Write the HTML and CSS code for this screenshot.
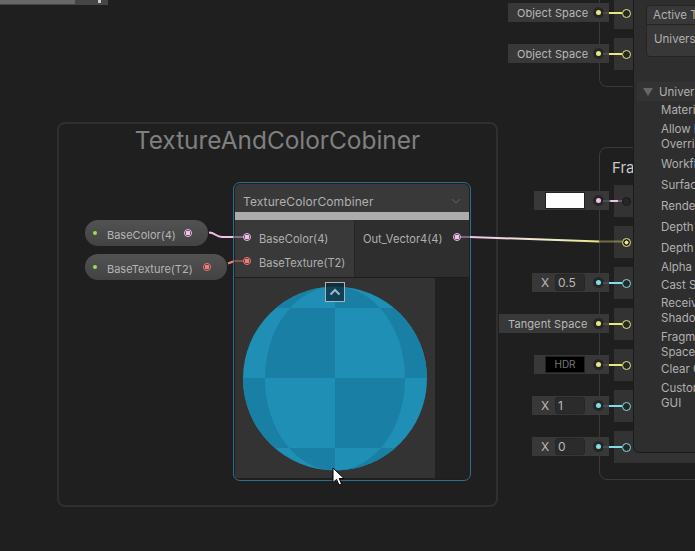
FILE: index.html
```html
<!DOCTYPE html>
<html lang="en">
<head>
    <meta charset="UTF-8">
    <title>Shader Graph</title>
    <link rel="stylesheet" href="styles.css">
</head>
<body>
    <div class="canvas">
        <div class="top-bar"><div class="top-bar-fill"></div><div class="top-bar-mark"></div></div>

        <div class="group">
            <div class="group-title">TextureAndColorCobiner</div>
        </div>

        <div class="context context-vertex"></div>
        <div class="context context-fragment"></div>

        <!-- wires between nodes -->
        <svg class="wires" width="695" height="551" viewBox="0 0 695 551">
            <defs>
                <linearGradient id="outWire" gradientUnits="userSpaceOnUse" x1="470" y1="237" x2="600" y2="241">
                    <stop offset="0" stop-color="#f2c0ea"/>
                    <stop offset="0.55" stop-color="#f0ecd0"/>
                    <stop offset="1" stop-color="#e6e67c"/>
                </linearGradient>
            </defs>
            <path class="wire" d="M209 232.5C215 232.5 216 237 222 237H233" stroke="#f2c0ea"/>
            <path class="wire-fade" d="M233 237H244" stroke="#f2c0ea"/>
            <path class="wire" d="M228 263.5L233 261.5" stroke="#f08080"/>
            <path class="wire-fade" d="M233 261H244" stroke="#f08080"/>
            <path class="wire-fade" d="M461 237H470" stroke="#f2c0ea"/>
            <path class="wire" d="M470 237L599 241.5" stroke="url(#outWire)"/>
            <path class="wire-fade" d="M599 241.5H622" stroke="#e6e67c"/>
        </svg>

        <div class="pill pill-color">
            <span class="pill-dot"></span>
            <span class="pill-label">BaseColor(4)</span>
            <span class="port port-pink"></span>
        </div>
        <div class="pill pill-texture">
            <span class="pill-dot"></span>
            <span class="pill-label">BaseTexture(T2)</span>
            <span class="port port-red"></span>
        </div>

        <div class="node">
            <div class="node-header">
                <span>TextureColorCombiner</span>
                <svg class="node-chevron" width="10" height="6" viewBox="0 0 10 6"><path d="M1 1l4 4 4-4" fill="none" stroke="#555" stroke-width="1.2"/></svg>
            </div>
            <div class="node-bar"></div>
            <div class="node-ports">
                <div class="node-inputs">
                    <div class="node-port"><span class="port port-pink"></span>BaseColor(4)</div>
                    <div class="node-port"><span class="port port-red"></span>BaseTexture(T2)</div>
                </div>
                <div class="node-outputs">
                    <div class="node-port">Out_Vector4(4)<span class="port port-pink"></span></div>
                </div>
            </div>
            <div class="node-preview">
                <div class="preview-area">
                    <svg class="sphere" width="200" height="200" viewBox="235 278 200 200">
                        <defs>
                            <clipPath id="sphereClip"><circle cx="335" cy="378.5" r="92"/></clipPath>
                        </defs>
                        <circle cx="335" cy="378.5" r="92" fill="#1f8fb6"/>
                        <path clip-path="url(#sphereClip)" fill="#1a7fa4" fill-rule="evenodd" d="M243 286H335V471H243Z M265 378.5a70 92 0 1 0 140 0a70 92 0 1 0 -140 0Z M243 308H427V378H243Z M243 448H427V471H243Z"/>
                    </svg>
                    <div class="collapse-btn">
                        <svg width="12" height="8" viewBox="0 0 12 8"><path d="M1.5 6.5L6 2l4.5 4.5" fill="none" stroke="#a4b4bc" stroke-width="2"/></svg>
                    </div>
                </div>
            </div>
        </div>

        <div class="stack stack-vertex">
            <div class="row port-yellow"><div class="field"><span class="field-text">Object Space</span><span class="field-dot"></span></div><div class="block"><span class="stub"></span><span class="slot"></span></div></div>
            <div class="row port-yellow"><div class="field"><span class="field-text">Object Space</span><span class="field-dot"></span></div><div class="block"><span class="stub"></span><span class="slot"></span></div></div>
        </div>

        <div class="stack stack-fragment">
            <div class="row port-rose">
                <div class="field field-swatch"><span class="swatch"></span><span class="field-dot"></span></div>
                <div class="block"><span class="stub stub-short"></span><span class="slot slot-dim"></span></div>
            </div>
            <div class="row port-yellow">
                <div class="block"><span class="slot slot-linked"></span></div>
            </div>
            <div class="row port-cyan">
                <div class="field field-number"><span class="axis">X</span><span class="num">0.5</span><span class="field-dot"></span></div>
                <div class="block"><span class="stub"></span><span class="slot"></span></div>
            </div>
            <div class="row port-yellow">
                <div class="field field-wide"><span class="field-text">Tangent Space</span><span class="field-dot"></span></div>
                <div class="block"><span class="stub"></span><span class="slot"></span></div>
            </div>
            <div class="row port-yellow">
                <div class="field field-swatch"><span class="swatch swatch-hdr">HDR</span><span class="field-dot"></span></div>
                <div class="block"><span class="stub"></span><span class="slot"></span></div>
            </div>
            <div class="row port-cyan">
                <div class="field field-number"><span class="axis">X</span><span class="num">1</span><span class="field-dot"></span></div>
                <div class="block"><span class="stub"></span><span class="slot"></span></div>
            </div>
            <div class="row port-cyan">
                <div class="field field-number"><span class="axis">X</span><span class="num">0</span><span class="field-dot"></span></div>
                <div class="block"><span class="stub"></span><span class="slot"></span></div>
            </div>
        </div>

        <div class="context-title">Fragment</div>

        <div class="inspector">
            <div class="card">
                <div class="card-head">Active Targets</div>
                <div class="card-body">Universal</div>
            </div>
            <div class="section-head"><span class="triangle"></span>Universal</div>
            <ul class="props">
                <li>Material</li>
                <li class="two">Allow Material<br>Override</li>
                <li class="wide">Workflow</li>
                <li class="wide">Surface</li>
                <li class="wide">Render Face</li>
                <li class="wide">Depth Write</li>
                <li>Depth Test</li>
                <li class="tight">Alpha Clip</li>
                <li class="tight">Cast Shadows</li>
                <li>Receive<br>Shadows</li>
                <li class="snug">Fragment<br>Space</li>
                <li>Clear Coat</li>
                <li>Custom<br>GUI</li>
            </ul>
        </div>

        <svg class="cursor" width="14" height="20" viewBox="0 0 14 20">
            <path d="M1 1V15.5L4.6 12.4 7 18l2.6-1.1-2.4-5.4H12Z" fill="#fff" stroke="#000" stroke-width="1"/>
        </svg>
    </div>
</body>
</html>
```

FILE: styles.css
```css
body {
    margin: 0;
    background-color: #1f1f1f;
    font-family: Inter, "Liberation Sans", sans-serif;
    color: #b0b0b0;
    font-size: 11px;
}
.canvas {
    position: relative;
    width: 695px;
    height: 551px;
    overflow: hidden;
}
.top-bar {
    position: absolute;
    left: 0;
    top: 0;
    width: 108px;
    height: 5px;
    background-color: #454545;
}
.top-bar-fill {
    width: 75px;
    height: 4px;
    background-color: #686868;
}
.top-bar-mark {
    position: absolute;
    left: 98px;
    top: 0;
    width: 3px;
    height: 3px;
    background-color: #ccc;
}
.group {
    position: absolute;
    left: 57px;
    top: 122px;
    width: 437px;
    height: 381px;
    border: 2px solid #2f2f2f;
    border-radius: 8px;
}
.group-title {
    margin-top: 1px;
    text-align: center;
    font-size: 24.4px;
    line-height: 30px;
    color: #808080;
}
.context {
    position: absolute;
    left: 599px;
    width: 140px;
    border: 1px solid #3a3a3a;
    border-radius: 8px;
}
.context-vertex {
    top: -60px;
    height: 145px;
}
.context-fragment {
    top: 147px;
    height: 331px;
}
.context-title {
    position: absolute;
    left: 612px;
    top: 158px;
    width: 21px;
    overflow: hidden;
    font-size: 15px;
    line-height: 20px;
    color: #c8c8c8;
}
.wires {
    position: absolute;
    left: 0;
    top: 0;
    z-index: 3;
    pointer-events: none;
}
.wire {
    fill: none;
    stroke-width: 2;
}
.wire-fade {
    fill: none;
    stroke-width: 2;
    opacity: 0.4;
}
.pill {
    position: absolute;
    left: 85px;
    height: 26px;
    display: flex;
    align-items: center;
    box-sizing: border-box;
    padding-left: 8px;
    border-radius: 13px;
    background: linear-gradient(#525252, #434343);
    color: #b4b4b4;
}
.pill-color {
    top: 220px;
    width: 123px;
}
.pill-texture {
    top: 254px;
    width: 142px;
}
.pill-dot {
    width: 4px;
    height: 4px;
    border-radius: 50%;
    background-color: #8fe356;
}
.pill-label {
    margin-left: 10px;
    padding-top: 4px;
    flex: 1;
}
.pill .port {
    margin-right: 16px;
}
.port {
    display: inline-block;
    box-sizing: border-box;
    width: 8px;
    height: 8px;
    border-radius: 50%;
    border: 1px solid currentColor;
    background: radial-gradient(circle, currentColor 0, currentColor 2.2px, #2c2c2c 2.6px);
}
.port-pink {
    color: #f2c0ea;
}
.port-red {
    color: #f07c7c;
}
.node {
    position: absolute;
    left: 233px;
    top: 182px;
    z-index: 2;
    box-sizing: border-box;
    width: 238px;
    height: 299px;
    border: 1.5px solid #2b6f90;
    border-radius: 7px;
    padding: 1px;
    background-color: #1f1f1f;
}
.node-header {
    box-sizing: border-box;
    height: 28px;
    display: flex;
    align-items: center;
    justify-content: space-between;
    padding: 6px 8px 0 8px;
    border-radius: 5px 5px 0 0;
    background-color: #393939;
    font-size: 12px;
    letter-spacing: 0.1px;
}
.node-bar {
    height: 8px;
    background-color: #acacac;
}
.node-ports {
    display: flex;
    box-sizing: border-box;
    height: 57.5px;
    border-bottom: 1px solid #1c1c1c;
}
.node-inputs {
    flex: 0 0 120px;
    padding: 6.5px 0 0 8px;
    box-sizing: border-box;
    background-color: #393939;
    border-right: 1px solid #262626;
}
.node-outputs {
    flex: 1;
    min-width: 0;
    padding: 6.5px 8px 0 8px;
    background-color: #2e2e2e;
}
.node-port {
    display: flex;
    align-items: center;
    height: 24px;
    gap: 8px;
    font-size: 11.1px;
}
.node-outputs .node-port {
    justify-content: space-between;
}
.node-port .port {
    margin-bottom: 4px;
}
.node-preview {
    height: 200px;
    background-color: #212121;
}
.preview-area {
    position: relative;
    width: 200px;
    height: 200px;
    background-color: #333;
}
.sphere {
    display: block;
}
.collapse-btn {
    position: absolute;
    left: 90px;
    top: 4px;
    box-sizing: border-box;
    width: 20px;
    height: 20px;
    display: flex;
    align-items: center;
    justify-content: center;
    border: 1px solid #a8b4ba;
    background-color: rgba(10, 40, 55, 0.72);
}
.stack {
    position: absolute;
    left: 499px;
    width: 200px;
    display: flex;
    flex-direction: column;
    gap: 9px;
}
.stack-vertex {
    top: -3px;
}
.stack-fragment {
    top: 185px;
}
.row {
    position: relative;
    height: 32px;
    display: flex;
    align-items: center;
    justify-content: flex-end;
}
.port-yellow {
    --port: #e8e87c;
}
.port-cyan {
    --port: #7fdfe6;
}
.port-rose {
    --port: #f2c0ea;
}
.field {
    position: absolute;
    left: 9px;
    right: 90px;
    top: 6px;
    height: 19px;
    display: flex;
    align-items: center;
    justify-content: space-between;
    box-sizing: border-box;
    padding: 0 8px 0 9px;
    background-color: #383838;
    color: #b8b8b8;
}
.field-swatch {
    left: 35px;
    padding-left: 11px;
}
.field-number {
    left: 33px;
    padding-left: 9px;
}
.field-wide {
    left: 0;
}
.field-text {
    font-size: 11px;
    letter-spacing: 0.1px;
}
.field-dot {
    box-sizing: border-box;
    width: 5px;
    height: 5px;
    margin-left: auto;
    border-radius: 50%;
    background-color: var(--port);
    box-shadow: 0 0 0 3px #262626;
}
.swatch {
    width: 40px;
    height: 17px;
    box-sizing: border-box;
    border: 1px solid #222;
    background-color: #fff;
}
.swatch-hdr {
    background-color: #000;
    color: #777;
    font-size: 10px;
    line-height: 15px;
    text-align: center;
}
.axis {
    font-size: 12px;
    width: 14px;
}
.num {
    width: 30px;
    height: 17px;
    box-sizing: border-box;
    border-radius: 3px;
    border: 1px solid #262626;
    background-color: #2b2b2b;
    padding-left: 2px;
    font-size: 12px;
    line-height: 15px;
}
.block {
    position: relative;
    width: 85px;
    height: 32px;
    background-color: #333;
}
.stub {
    position: absolute;
    left: -11px;
    top: 15px;
    width: 19px;
    height: 2px;
    background: linear-gradient(90deg, #4c4c4c 0, #4c4c4c 6px, var(--port) 6px);
}
.stub-short {
    background: linear-gradient(90deg, #4c4c4c 0, #4c4c4c 6px, var(--port) 8px, var(--port) 15px, #6a5a68 15px);
}
.slot {
    position: absolute;
    left: 8px;
    top: 11.5px;
    box-sizing: border-box;
    width: 9px;
    height: 9px;
    border-radius: 50%;
    border: 1.5px solid var(--port);
    background-color: #262626;
}
.slot-dim {
    border-color: #1a1a1a;
}
.slot-linked {
    background: radial-gradient(circle, var(--port) 0, var(--port) 1.8px, #262626 2.2px);
}
.inspector {
    position: absolute;
    left: 633px;
    top: -2px;
    z-index: 4;
    width: 80px;
    height: 455px;
    box-sizing: border-box;
    border: 1px solid #1a1a1a;
    border-radius: 0 0 0 6px;
    background-color: #2e2e2e;
    color: #b0b0b0;
    font-size: 11.5px;
    white-space: nowrap;
    overflow: hidden;
}
.card {
    margin: 6px 0 0 12px;
    height: 50px;
    border: 1px solid #242424;
    border-radius: 4px;
    background-color: #383838;
}
.card-head {
    height: 18px;
    padding-left: 6px;
    line-height: 19px;
    border-bottom: 1px solid #242424;
}
.card-body {
    padding: 7px 0 0 7px;
}
.section-head {
    display: flex;
    align-items: center;
    height: 19px;
    margin: 25px 0 0 3px;
    padding-left: 6px;
    background-color: #333;
}
.triangle {
    width: 0;
    height: 0;
    margin-right: 6px;
    border-left: 5px solid transparent;
    border-right: 5px solid transparent;
    border-top: 8px solid #666;
}
.props {
    list-style: none;
    margin: 2px 0 0 27px;
    padding: 0;
    line-height: 15px;
}
.props li {
    padding: 0 0 4px 0;
}
.props .two {
    padding-bottom: 5px;
}
.props .wide {
    padding-bottom: 6px;
}
.props .tight {
    padding-bottom: 3px;
}
.props .snug {
    padding-bottom: 2px;
}
.cursor {
    position: absolute;
    left: 332px;
    top: 467px;
    z-index: 5;
}
```
